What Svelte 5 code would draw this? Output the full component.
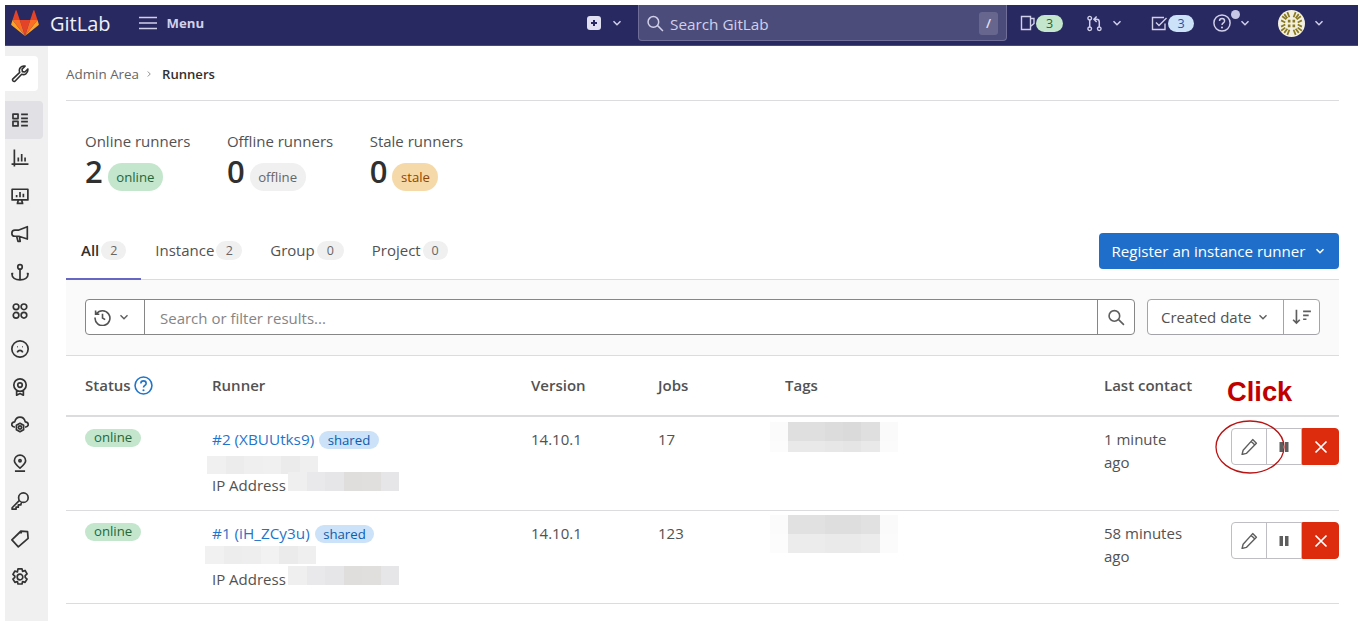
<script>
  const side = [
    { d: 'M1.750 2.750h4.500v4h-4.500zM1.750 9.250h4.500v4h-4.500zM9 3h6M9 6.500h6M9 9.500h6M9 13h6' },
    { d: 'M3 .5v15M.5 13.500H15.500M6.500 11V7.500M9.500 11V4.500M12.500 11V7.500' },
    { d: 'M1 2h14v9.500H1zM5 14.500h6M6.500 11.500l-.7 3M9.500 11.500l.7 3M5 9V7M8 9V4.500M11 9V6' },
    { d: 'M14.500 1.500v11L7 10H3.500a2.750 2.750 0 0 1 0-5.500H7zM5 10l1.200 4.500h2L7.500 10.500' },
    { d: 'M8 5.500v9.500M2 9.500H.8c0 3.500 3 5.500 7.200 5.500s7.200-2 7.200-5.500H14M10 3.500a2 2 0 1 1-4 0 2 2 0 0 1 4 0z' },
    { d: 'M7 4.250a2.500 2.500 0 1 1-5 0 2.500 2.500 0 0 1 5 0zM14 4.250a2.500 2.500 0 1 1-5 0 2.500 2.500 0 0 1 5 0zM7 11.750a2.500 2.500 0 1 1-5 0 2.500 2.500 0 0 1 5 0zM14 11.750a2.500 2.500 0 1 1-5 0 2.500 2.500 0 0 1 5 0z' },
    { d: 'M15.250 8a7.250 7.250 0 1 1-14.500 0 7.250 7.250 0 0 1 14.500 0zM5.500 11c.6-1.200 1.500-1.800 2.500-1.800s1.900.6 2.500 1.800M5.500 6h.6M9.900 6h.6' },
    { d: 'M13.500 6.250a5.500 5.500 0 1 1-11 0 5.500 5.500 0 0 1 11 0zM10 6.250a2 2 0 1 1-4 0 2 2 0 0 1 4 0zM5 11v4.250l3-1.500 3 1.500V11' },
    { d: 'M3.500 10C1.500 9.500 .5 8.300 .7 7.200 1 5.800 2.200 5.200 3.300 5.200 4 2.500 6 1 8 1s4 1.500 4.700 4.200c1.100 0 2.300.6 2.600 2 .2 1.100-.8 2.300-2.800 2.800M8 6.500l3.200 1.800v3.900L8 14l-3.200-1.800V8.300zM9.400 10.200a1.400 1.400 0 1 1-2.800 0 1.400 1.400 0 0 1 2.800 0z' },
    { d: 'M8 12.500C5.500 10.500 3 8.500 3 6a5 5 0 0 1 10 0c0 2.500-2.500 4.500-5 6.500zM3.500 15.250h9M9 6a1 1 0 1 1-2 0 1 1 0 0 1 2 0z' },
    { d: 'M15.250 5a4.250 4.250 0 1 1-8.500 0 4.250 4.250 0 0 1 8.500 0zM7.500 7.500L1 14v1.250h3.500V13.500h2v-2h2.200l.6-2.500M11.500 4.500h.01' },
    { d: 'M.8 8.800L7.600 2.400h2.200M.8 8.800l5.700 6.200 8.700-7.500-.5-6-6-.5zM11.700 4.800h.01' },
    { d: 'M6.200 .8h3.600l.5 2.200 2.200-.8 1.800 3-1.700 1.500v1.600l1.700 1.500-1.800 3-2.200-.8-.5 2.200H6.200l-.5-2.200-2.200.8-1.800-3 1.700-1.500V7.200L1.700 5.700l1.800-3 2.200.8zM10.500 8a2.500 2.500 0 1 1-5 0 2.500 2.500 0 0 1 5 0z' }
  ];
  const stats = [
    { label: 'Online runners', n: 2, tone: 'ok', badge: 'online' },
    { label: 'Offline runners', n: 0, tone: 'off', badge: 'offline' },
    { label: 'Stale runners', n: 0, tone: 'warn', badge: 'stale' }
  ];
  const tabs = [
    { t: 'All', n: 2, on: true, w: 25 },
    { t: 'Instance', n: 2, w: 26 },
    { t: 'Group', n: 0, w: 27 },
    { t: 'Project', n: 0, w: 25 }
  ];
  const rows = [
    {
      name: '#2 (XBUUtks9)', version: '14.10.1', jobs: '17', a: '1 minute', b: 'ago', hostClass: 'h1',
      tagClass: 'tg1',
      host: ['#f0f0f0','#ececec','#efefef','#f0f0f0','#ebebeb','#efefef'],
      ip: ['#efefef','#e9e9eb','#e6e6e8','#dfdedc','#e0dfdd','#e6e6e8'],
      tag: [['#fbfbfb','#dfdfdf','#dfdfdf','#dcdcdc','#dadada','#dfdfdf','#fafafa'],['#fcfcfc','#e9e9e9','#e9e9e9','#e7e7e7','#e5e5e5','#e9e9e9','#fbfbfb']]
    },
    {
      name: '#1 (iH_ZCy3u)', version: '14.10.1', jobs: '123', a: '58 minutes', b: 'ago', hostClass: 'h2',
      tagClass: 'tg2',
      host: ['#f1f1f1','#ededed','#eeeeee','#f2f2f2','#ebebeb','#efefef'],
      ip: ['#efefef','#e9e9eb','#e6e6e8','#dfdedc','#e0dfdd','#e6e6e8'],
      tag: [['#fbfbfb','#e1e1e1','#e1e1e1','#dedede','#dedede','#e1e1e1','#fafafa'],['#fcfcfc','#ececec','#ececec','#eaeaea','#eaeaea','#ececec','#fbfbfb']]
    }
  ];
  const chev = 'M4 6l4 4 4-4';
</script>

<div class="page">
  <header class="nav">
    <div class="brand">
      <svg class="logo" viewBox="0 0 28 26" width="28" height="26">
        <path fill="#e24329" d="M14 26l5.200-16H8.800z"/>
        <path fill="#fc6d26" d="M14 26L8.800 10H1.500z"/>
        <path fill="#fca326" d="M1.500 10L.2 14.200c-.1.400 0 .8.400 1.100L14 26z"/>
        <path fill="#e24329" d="M1.500 10h7.300L5.600.6c-.2-.5-.9-.5-1 0z"/>
        <path fill="#fc6d26" d="M14 26l5.200-16h7.300z"/>
        <path fill="#fca326" d="M26.500 10l1.300 4.200c.1.400 0 .8-.4 1.100L14 26z"/>
        <path fill="#e24329" d="M26.500 10h-7.300L22.400.6c.2-.5.900-.5 1 0z"/>
      </svg>
      <span class="wordmark">GitLab</span>
    </div>
    <button class="menu">
      <svg viewBox="0 0 20 14" width="20" height="14"><path d="M1 1.500h18M1 7h18M1 12.500h18" stroke="#d1d0eb" stroke-width="1.600" fill="none"/></svg>
      <span>Menu</span>
    </button>
    <div class="spacer"></div>
    <div class="plus">
      <svg viewBox="0 0 14 14" width="14" height="14"><rect width="14" height="14" rx="3" fill="#e1e0f2"/><path d="M7 4v6M4 7h6" stroke="#292961" stroke-width="2"/></svg>
      <svg class="c" viewBox="0 0 16 16" width="14" height="14"><path d={chev}/></svg>
    </div>
    <div class="search">
      <svg viewBox="0 0 16 16" width="17" height="17"><path d="M11 6.500a5 5 0 1 1-10 0 5 5 0 0 1 10 0zM10 10l5 5" stroke="#d1d0eb" stroke-width="1.400" fill="none"/></svg>
      <span class="ph">Search GitLab</span>
      <kbd>/</kbd>
    </div>
    <div class="items">
      <div class="it issues">
        <svg viewBox="0 0 16 16" width="16" height="16"><path d="M1.500 1.500h9v13h-9zM10.500 3.500h3.500v5l-3.500 3" stroke="#d1d0eb" stroke-width="1.400" fill="none"/></svg>
        <span class="cnt g">3</span>
      </div>
      <div class="it mr">
        <svg viewBox="0 0 16 16" width="17" height="17"><path d="M3.500 4.500v7M12.500 11.500V6.500c0-1.500-1-2.500-2.500-2.500H8M10 1.500L7.500 4 10 6.500" stroke="#d1d0eb" stroke-width="1.400" fill="none"/><circle cx="3.500" cy="3" r="1.700" stroke="#d1d0eb" stroke-width="1.300" fill="none"/><circle cx="3.500" cy="13" r="1.700" stroke="#d1d0eb" stroke-width="1.300" fill="none"/><circle cx="12.500" cy="13" r="1.700" stroke="#d1d0eb" stroke-width="1.300" fill="none"/></svg>
        <svg class="c" viewBox="0 0 16 16" width="14" height="14"><path d={chev}/></svg>
      </div>
      <div class="it todo">
        <svg viewBox="0 0 18 16" width="18" height="16"><path d="M14 8.500v6H1.500v-12H13M5 7.500l3 3L15.500 3" stroke="#d1d0eb" stroke-width="1.400" fill="none"/></svg>
        <span class="cnt b">3</span>
      </div>
      <div class="it help">
        <svg viewBox="0 0 16 16" width="18" height="18"><circle cx="8" cy="8" r="7.200" stroke="#d1d0eb" stroke-width="1.300" fill="none"/><path d="M5.800 6.200c0-3 4.500-3 4.500 0 0 1.800-2.300 1.700-2.300 3.600" stroke="#d1d0eb" stroke-width="1.300" fill="none"/><circle cx="8" cy="12" r=".9" fill="#d1d0eb"/></svg>
        <i class="dot"></i>
        <svg class="c" viewBox="0 0 16 16" width="14" height="14"><path d={chev}/></svg>
      </div>
      <div class="it avatar">
        <svg viewBox="0 0 26 26" width="27" height="27">
          <defs><clipPath id="av"><circle cx="13" cy="13" r="13"/></clipPath></defs>
          <g clip-path="url(#av)">
            <rect width="26" height="26" fill="#f3f0e2"/>
            <path d="M4 6l4 3M3 10l4 2M9 2l2 5M6 4l3 4M17 2l-2 5M20 4l-3 4M22 6l-4 3M23 10l-4 2M3 20l4-3M3 16l4-2M9 24l2-5M6 22l3-4M17 24l-2-5M20 22l-3-4M23 20l-4-3M23 16l-4-2" stroke="#8a7a22" stroke-width="1.700"/>
            <path d="M9.500 9.500h2.500V12H9.500zM14 9.500h2.500V12H14zM9.500 14H12v2.500H9.500zM14 14h2.500v2.500H14z" fill="#8a7a22"/>
          </g>
        </svg>
        <svg class="c" viewBox="0 0 16 16" width="14" height="14"><path d={chev}/></svg>
      </div>
    </div>
  </header>

  <div class="shell">
    <aside class="side">
      <div class="ctx">
        <svg viewBox="0 0 16 16" width="18" height="18"><path d="M15 4.500a4 4 0 0 1-5.500 3.700L3.500 14.500a1.500 1.500 0 0 1-2-2l6.300-6A4 4 0 0 1 12.500 1L9.800 3.700l.3 2.200 2.200.3L15 3.500z" fill="none" stroke="#303030" stroke-width="1.400" stroke-linejoin="round"/></svg>
      </div>
      <ul>
        {#each side as s, i}
          <li class:active={i === 0}>
            <svg viewBox="0 0 16 16" width="18" height="18"><path d={s.d}/></svg>
          </li>
        {/each}
      </ul>
    </aside>

    <main class="main">
      <nav class="crumbs">
        <span class="c1">Admin Area</span>
        <svg viewBox="0 0 16 16" width="10" height="10"><path d="M6 4l4 4-4 4" fill="none" stroke="#868686" stroke-width="1.500"/></svg>
        <b>Runners</b>
      </nav>

      <section class="stats">
        {#each stats as s}
          <div class="stat">
            <div class="lab">{s.label}</div>
            <div class="val"><span class="num">{s.n}</span><span class="pill big {s.tone}">{s.badge}</span></div>
          </div>
        {/each}
      </section>

      <div class="tabs">
        <div class="tablist">
          {#each tabs as t}
            <div class="tab" class:on={t.on}>
              <span class="tt">{t.t}</span><span class="tn" style="width:{t.w}px">{t.n}</span>
            </div>
          {/each}
        </div>
        <button class="reg">
          <span>Register an instance runner</span>
          <svg viewBox="0 0 16 16" width="14" height="14"><path d={chev} fill="none" stroke="#fff" stroke-width="1.800"/></svg>
        </button>
      </div>

      <div class="filter">
        <div class="fbox">
          <div class="hist">
            <svg viewBox="0 0 16 16" width="17" height="17"><path d="M2.300 4.500A7 7 0 1 1 1 8M1.500 1.500v3.500H5M8 4.500V8.500l2.500 1.500" fill="none" stroke="#525252" stroke-width="1.500"/></svg>
            <svg class="cd" viewBox="0 0 16 16" width="14" height="14"><path d={chev}/></svg>
          </div>
          <div class="finput">Search or filter results...</div>
          <div class="fsearch">
            <svg viewBox="0 0 16 16" width="17" height="17"><path d="M11 6.500a5 5 0 1 1-10 0 5 5 0 0 1 10 0zM10 10l5 5" fill="none" stroke="#5e5e5e" stroke-width="1.500"/></svg>
          </div>
        </div>
        <div class="sortg">
          <div class="sdate"><span>Created date</span><svg class="cd" viewBox="0 0 16 16" width="14" height="14"><path d={chev}/></svg></div>
          <div class="sdir">
            <svg viewBox="0 0 18 16" width="20" height="18"><path d="M4 1.500v12M1 10.500l3 3 3-3M10 3h7M10 6.500h5M10 10h3" fill="none" stroke="#5e5e5e" stroke-width="1.500"/></svg>
          </div>
        </div>
      </div>

      <div class="grid head">
        <div class="status-h">Status
          <svg viewBox="0 0 18 18" width="19" height="19"><circle cx="9" cy="9" r="8" fill="none" stroke="#1f75cb" stroke-width="1.500"/><path d="M6.500 7c0-3.200 5-3.200 5 0 0 2-2.500 1.900-2.500 4" fill="none" stroke="#1f75cb" stroke-width="1.500"/><circle cx="9" cy="13.500" r="1" fill="#1f75cb"/></svg>
        </div>
        <div>Runner</div><div>Version</div><div>Jobs</div><div>Tags</div><div>Last contact</div><div></div>
      </div>

      {#each rows as r}
        <div class="grid row">
          <div><span class="pill ok small">online</span></div>
          <div class="rc">
            <div class="rl"><a href="#top">{r.name}</a><span class="shared">shared</span></div>
            <div class="mos host {r.hostClass}">{#each r.host as c}<i style="background:{c}"></i>{/each}</div>
            <div class="ipl"><span class="ipt">IP Address</span><span class="mos ip">{#each r.ip as c}<i style="background:{c}"></i>{/each}</span></div>
          </div>
          <div>{r.version}</div>
          <div>{r.jobs}</div>
          <div class="tagc {r.tagClass}">
            {#each r.tag as line, li}
              <div class="mos tl" class:second={li === 1}>{#each line as c}<i style="background:{c}"></i>{/each}</div>
            {/each}
          </div>
          <div class="lc">{r.a}<br />{r.b}</div>
          <div class="acts">
            <button class="ab e" aria-label="Edit">
              <svg viewBox="0 0 16 16" width="17" height="17"><path d="M11 1.500l3.500 3.500L5 14.500l-4 1 1-4zM9.500 3l3.500 3.500" fill="none" stroke="#5e5e5e" stroke-width="1.300" stroke-linejoin="round"/></svg>
            </button>
            <button class="ab p" aria-label="Pause">
              <svg viewBox="0 0 16 16" width="16" height="16"><path d="M3.500 3H7v10H3.500zM9 3h3.500v10H9z" fill="#5e5e5e"/></svg>
            </button>
            <button class="ab d" aria-label="Delete">
              <svg viewBox="0 0 16 16" width="16" height="16"><path d="M2.500 2.500l11 11M13.500 2.500l-11 11" fill="none" stroke="#fff" stroke-width="1.700"/></svg>
            </button>
          </div>
        </div>
      {/each}
    </main>
  </div>

  <div class="click">Click</div>
  <svg class="ring" viewBox="0 0 72 54" width="72" height="54"><ellipse cx="36" cy="27" rx="34" ry="26" fill="none" stroke="#b81414" stroke-width="1.300"/></svg>
</div>

<style>
  :global(html), :global(body) { margin: 0; background: #fff; height: 626px; overflow: hidden; }
  .page { position: relative; width: 1353px; height: 626px; padding: 5px 0 0 5px; font-family: "Open Sans", "Noto Sans", sans-serif; font-size: 15px; color: #525252; }
  button { font: inherit; border: 0; background: none; padding: 0; }
  svg { display: block; flex: none; }
  .c path { fill: none; stroke: #d1d0eb; stroke-width: 1.700; }
  .cd path { fill: none; stroke: #5e5e5e; stroke-width: 1.600; }

  .nav { height: 41px; box-sizing: border-box; padding-bottom: 4px; background: #292961; display: flex; align-items: center; border-bottom: 1px solid #4a4a7a; }
  .brand { display: flex; align-items: center; padding-left: 6px; }
  .logo { margin-right: 11px; }
  .wordmark { font-size: 20px; color: #f0f0f5; }
  .menu { display: flex; align-items: center; margin-left: 27px; color: #d1d0eb; font-weight: 700; font-size: 13.200px; gap: 9px; }
  .spacer { flex: 1; }
  .plus { display: flex; align-items: center; gap: 9px; margin-right: 14px; }
  .search { width: 351px; height: 33px; background: #4c4c7a; border: 1px solid #6e6e98; border-top: 0; border-radius: 0 0 4px 4px; display: flex; align-items: center; padding: 2px 8px 0; gap: 6px; box-sizing: content-box; align-self: flex-start; }
  .ph { flex: 1; color: #d1d0eb; font-size: 15.300px; }
  kbd { width: 19px; height: 23px; background: #66668f; border-radius: 3px; color: #e0e0f2; font: 600 13px/23px "Open Sans", sans-serif; text-align: center; }
  .items { display: flex; align-items: center; margin-left: 13px; padding-right: 32px; }
  .it { display: flex; align-items: center; position: relative; }
  .issues { width: 66px; }
  .cnt { height: 17px; width: 27px; border-radius: 9px; text-align: center; font-size: 12.500px; line-height: 17px; }
  .cnt.g { background: #c3e6cd; color: #24663b; }
  .cnt.b { background: #cbe2f9; color: #0b5cad; width: 26px; }
  .mr { width: 65px; gap: 7px; }
  .todo { width: 62px; }
  .todo .cnt { margin-left: -1px; }
  .help { width: 65px; }
  .help .dot { position: absolute; left: 18px; top: -4px; width: 9px; height: 9px; border-radius: 50%; background: #c7c6e6; }
  .help .c { margin-left: 7px; }
  .avatar { gap: 7px; }

  .shell { display: flex; height: 575px; }
  .side { width: 43px; background: #f0f0f0; flex: none; }
  .ctx { width: 33px; height: 35px; margin: 10px 0; background: #fff; border-radius: 0 4px 4px 0; display: flex; align-items: center; justify-content: center; box-sizing: border-box; padding-right: 3px; }
  .side ul { list-style: none; margin: 0; padding: 0; }
  .side li { width: 38px; height: 38.100px; display: flex; align-items: center; justify-content: center; box-sizing: border-box; padding-right: 8px; border-radius: 0 4px 4px 0; }
  .side li.active { background: #e1e1e5; }
  .side li svg { fill: none; stroke: #333; stroke-width: 1.500; stroke-linejoin: round; }

  .main { flex: 1; padding: 0 19px 0 18px; min-width: 0; }
  .crumbs { height: 55px; box-sizing: border-box; border-bottom: 1px solid #dcdcde; display: flex; align-items: center; gap: 5px; font-size: 13.400px; padding-top: 1px; }
  .c1 { color: #666; }
  .crumbs b { margin-left: 3px; color: #303030; font-weight: 600; font-size: 13.100px; }

  .stats { display: flex; gap: 36.500px; padding: 29px 19px 0; height: 107px; box-sizing: border-box; }
  .lab { line-height: 22px; }
  .val { display: flex; align-items: flex-end; gap: 5px; }
  .num { font-size: 31px; line-height: 38px; color: #303030; font-weight: 600; }
  .pill { display: inline-block; border-radius: 14px; text-align: center; }
  .pill.big { height: 28px; line-height: 29px; padding: 0 8.500px; font-size: 13.200px; margin-bottom: -1px; }
  .ok { background: #c3e6cd; color: #24663b; }
  .off { background: #f0f0f0; color: #666; }
  .warn { background: #f5d9a8; color: #8f4700; }
  .pill.small { height: 18px; line-height: 17px; padding: 0 9px; font-size: 13.200px; display: block; width: max-content; margin-top: 1px; }

  .tabs { height: 72px; display: flex; justify-content: space-between; border-bottom: 1px solid #dcdcde; box-sizing: border-box; }
  .tablist { display: flex; align-items: flex-end; }
  .tab { padding: 0 14px 12px; height: 47px; display: flex; align-items: center; gap: 2px; box-sizing: border-box; margin-bottom: -1px; color: #525252; }
  .tab.on { border-bottom: 2px solid #6666c4; color: #303030; font-weight: 600; padding: 0 15px 10px; }
  .tt { font-size: 15px; padding-bottom: 2px; }
  .tn { height: 19px; background: #f0f0f0; border-radius: 10px; font-size: 12.500px; line-height: 19px; color: #666; text-align: center; font-weight: 400; }
  .reg { margin-top: 25px; height: 36px; width: 240px; background: #1f6fca; color: #fff; border-radius: 4px; display: flex; align-items: center; justify-content: center; gap: 7px; font-size: 15.100px; }

  .filter { height: 76px; background: #fafafa; border-bottom: 1px solid #dcdcde; box-sizing: border-box; padding: 19px 19px 0; display: flex; gap: 12px; align-items: flex-start; }
  .fbox { flex: 1; height: 36px; background: #fff; border: 1px solid #868686; border-radius: 4px; display: flex; box-sizing: border-box; }
  .hist { width: 59px; box-sizing: border-box; border-right: 1px solid #868686; display: flex; align-items: center; padding-left: 8px; gap: 6px; }
  .finput { flex: 1; padding-left: 15px; line-height: 36px; color: #858585; }
  .fsearch { width: 37px; box-sizing: border-box; border-left: 1px solid #868686; display: flex; align-items: center; justify-content: center; }
  .sortg { width: 173px; height: 36px; background: #fff; border: 1px solid #a4a3a8; border-radius: 4px; display: flex; box-sizing: border-box; }
  .sdate { flex: 1; display: flex; align-items: center; gap: 5px; padding-left: 13px; color: #525252; }
  .sdir { width: 36px; box-sizing: border-box; border-left: 1px solid #a4a3a8; display: flex; align-items: center; justify-content: center; }

  .grid { display: grid; grid-template-columns: 127px 319px 127px 127px 319px 127px 1fr; padding-left: 19px; }
  .head { height: 61px; font-weight: 600; align-items: center; border-bottom: 2px solid #dcdcde; box-sizing: border-box; padding-bottom: 1px; font-size: 15px; }
  .status-h { display: flex; align-items: center; gap: 3px; }
  .row { height: 94px; box-sizing: border-box; border-bottom: 1.500px solid #dcdcde; padding-top: 11px; line-height: 23px; position: relative; }
  .row + .row { height: 93px; }
  .rl { display: flex; align-items: center; gap: 5px; }
  a { color: #1f75cb; text-decoration: none; font-size: 15.300px; }
  .shared { height: 18px; line-height: 18px; padding: 0 8.500px; background: #cbe2f9; border-radius: 9px; color: #0b5cad; font-size: 13.200px; margin-top: 1px; }
  .mos { display: flex; }
  .mos i { width: 18.500px; display: block; }
  .host { height: 18px; margin-top: 5px; }
  .h1 { margin-left: -5px; }
  .h2 { margin-left: -7px; margin-top: 1px; margin-bottom: 4px; }
  .ipl { display: flex; height: 22px; margin-top: -2px; }
  .ipt { width: 76px; line-height: 26px; }
  .ip { height: 19px; }
  .tagc { margin-left: -15px; margin-top: -6px; }
  .tg2 { margin-top: -7px; }
  .tl { height: 19px; }
  .tg1 .second { height: 11px; }
  .tl i { width: 18.300px; }
  .acts { display: flex; height: 37px; }
  .ab { height: 37px; width: 36px; box-sizing: border-box; border: 1px solid #bfbfc3; display: flex; align-items: center; justify-content: center; background: #fff; margin-left: -1px; }
  .ab.e { border-radius: 4px 0 0 4px; margin-left: 0; }
  .ab.d { background: #dd2b0e; border-color: #dd2b0e; border-radius: 0 4px 4px 0; width: 37px; margin-left: 0; }

  .click { position: absolute; left: 1227px; top: 376px; font: 700 27.300px/32px "Liberation Sans", Arial, sans-serif; color: #c00000; }
  .ring { position: absolute; left: 1214px; top: 420px; }
</style>
